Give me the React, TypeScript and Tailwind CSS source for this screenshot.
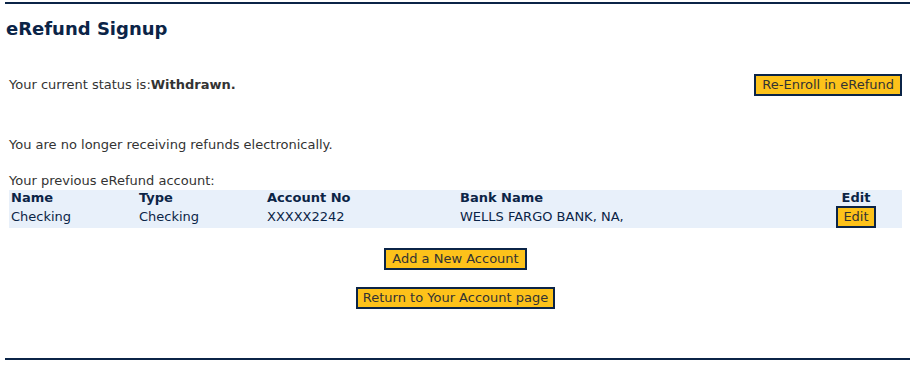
import React from 'react'

// ─── Data ─────────────────────────────────────────────────────────────────────

const accounts = [
  { name: 'Checking', type: 'Checking', accountNo: 'XXXXX2242', bank: 'WELLS FARGO BANK, NA,' },
]

// ─── Button ───────────────────────────────────────────────────────────────────

function GoldButton({ children, className = '' }: { children: React.ReactNode; className?: string }) {
  return (
    <button
      type="button"
      className={`border-2 border-[#0b2447] bg-[#fdc21a] px-[5px] h-[22px] leading-[18px] text-[13px] text-[#333] align-middle ${className}`}
    >
      {children}
    </button>
  )
}

// ─── App ──────────────────────────────────────────────────────────────────────

export default function App() {
  return (
    <div
      className="w-[910px] h-[368px] bg-white text-[13px] text-[#333] overflow-hidden"
      style={{ fontFamily: '"DejaVu Sans", Verdana, sans-serif' }}
    >
      {/* ── Top rule ─────────────────────────────────────────────────────────── */}
      <div className="ml-[5px] mt-[2px] h-[2px] bg-[#0b2447]" />

      {/* ── Heading ──────────────────────────────────────────────────────────── */}
      <h1 className="ml-[6px] mt-[13px] text-[18px] leading-[24px] font-bold text-[#0b2447]">eRefund Signup</h1>

      <div className="pl-[9px] pr-[8px]">
        {/* ── Status ─────────────────────────────────────────────────────────── */}
        <div className="mt-[33px] flex items-center justify-between">
          <p>
            Your current status is:<span className="font-bold">Withdrawn.</span>
          </p>
          <GoldButton className="px-[6px]">Re-Enroll in eRefund</GoldButton>
        </div>

        <p className="mt-[41px] leading-[16px]">You are no longer receiving refunds electronically.</p>

        {/* ── Previous account ───────────────────────────────────────────────── */}
        <p className="mt-[20px] leading-[16px]">Your previous eRefund account:</p>
        <table className="mt-[1px] w-full bg-[#e8f0fa] border-collapse">
          <thead>
            <tr className="text-left text-[#0b2447] h-[16px] leading-[16px]">
              <th className="w-[128px] pl-[2px] font-bold">Name</th>
              <th className="w-[128px] pl-[2px] font-bold">Type</th>
              <th className="w-[193px] pl-[2px] font-bold">Account No</th>
              <th className="pl-[2px] font-bold">Bank Name</th>
              <th className="w-[92px] text-center font-bold">Edit</th>
            </tr>
          </thead>
          <tbody>
            {accounts.map(a => (
              <tr key={a.accountNo} className="h-[22px] leading-[16px] text-[#0b2447]">
                <td className="pl-[2px] align-middle">{a.name}</td>
                <td className="pl-[2px] align-middle">{a.type}</td>
                <td className="pl-[2px] align-middle">{a.accountNo}</td>
                <td className="pl-[2px] align-middle">{a.bank}</td>
                <td className="text-center leading-none">
                  <GoldButton>Edit</GoldButton>
                </td>
              </tr>
            ))}
          </tbody>
        </table>

        {/* ── Actions ────────────────────────────────────────────────────────── */}
        <div className="mt-[20px] flex flex-col items-center gap-[17px]">
          <GoldButton className="px-[6px]">Add a New Account</GoldButton>
          <GoldButton>Return to Your Account page</GoldButton>
        </div>
      </div>

      {/* ── Bottom rule ──────────────────────────────────────────────────────── */}
      <div className="ml-[5px] mt-[49px] h-[2px] bg-[#0b2447]" />
    </div>
  )
}
